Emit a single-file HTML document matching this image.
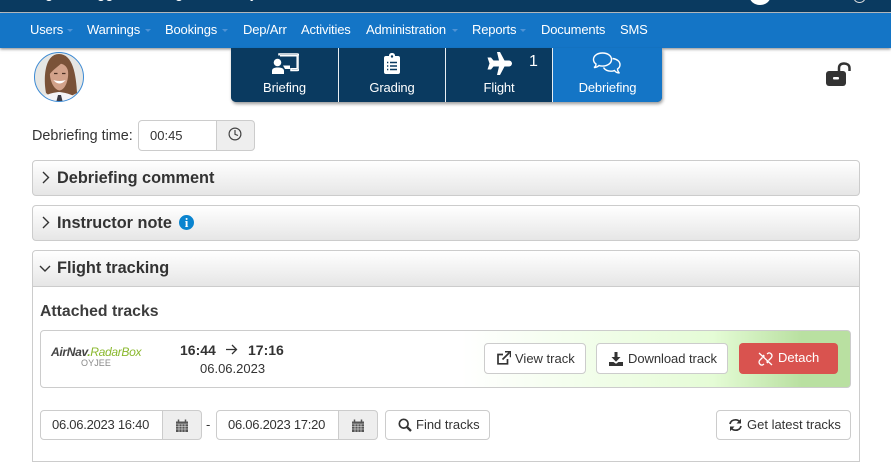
<!DOCTYPE html>
<html><head><meta charset="utf-8"><style>
*{box-sizing:border-box}
html,body{margin:0;padding:0;background:#fff;width:891px;height:469px;overflow:hidden;font-family:"Liberation Sans",Arial,sans-serif;color:#333}
.a{position:absolute}
.t{position:absolute;white-space:nowrap;line-height:16px}
.nav{color:#fff;font-size:13px;top:22px;letter-spacing:-.17px}
.car{position:absolute;top:29px;width:0;height:0;border-left:3.5px solid transparent;border-right:3.5px solid transparent;border-top:3px solid #4f93d6}
.tab{position:absolute;top:48px;height:54px;width:107px;background:#0a3a60;color:#fff;font-size:13px;text-align:center;padding-top:32px;letter-spacing:-.15px;line-height:16px}
.sep{position:absolute;top:48px;width:1px;height:54px;background:#e8eef3}
.panel{position:absolute;left:32px;width:828px;height:36px;border:1px solid #ccc;border-radius:4px;background:linear-gradient(#fff,#e6e6e6)}
.pt{position:absolute;font-size:16.3px;font-weight:bold;color:#333;left:57px;white-space:nowrap;line-height:18px}
.box{position:absolute;border:1px solid #ccc;border-radius:4px;background:#fff;font-size:13px;line-height:28px;white-space:nowrap;color:#333}
.d{letter-spacing:-.26px}
.add{position:absolute;background:#eee;border:1px solid #ccc;border-radius:0 4px 4px 0}
.top{position:absolute;top:-14px;color:#fff;font-size:15px;line-height:16px}
svg{position:absolute;display:block}
</style></head><body>
<div class="a" style="left:0;top:0;width:891px;height:12px;background:#0a3a60;overflow:hidden">
<span class="top" style="left:45px">g</span>
<span class="top" style="left:97px">gg</span>
<span class="top" style="left:175px">g</span>
<span class="top" style="left:250px">y</span>
<div class="a" style="left:749px;top:-15px;width:22px;height:20px;border-radius:50%;background:#fff"></div>
<div class="a" style="left:853px;top:-10px;width:13px;height:13px;border-radius:50%;border:1.5px solid #ddd"></div>
</div>
<div class="a" style="left:0;top:12px;width:891px;height:1px;background:#c4c8cc"></div>
<div class="a" style="left:0;top:13px;width:891px;height:35px;background:#1475c6;box-shadow:0 1px 3px rgba(0,0,0,.5)"></div>
<span class="t nav" style="left:30px">Users</span><i class="car" style="left:67px"></i>
<span class="t nav" style="left:87px">Warnings</span><i class="car" style="left:145px"></i>
<span class="t nav" style="left:165px">Bookings</span><i class="car" style="left:222px"></i>
<span class="t nav" style="left:243px;width:44px;overflow:hidden">Dep/Arr</span>
<span class="t nav" style="left:301px">Activities</span>
<span class="t nav" style="left:366px">Administration</span><i class="car" style="left:452px"></i>
<span class="t nav" style="left:472px">Reports</span><i class="car" style="left:520px"></i>
<span class="t nav" style="left:541px">Documents</span>
<span class="t nav" style="left:620px">SMS</span>

<svg style="left:33px;top:51px" width="52" height="52" viewBox="0 0 52 52">
<defs><clipPath id="c"><circle cx="26" cy="26" r="24.500"/></clipPath></defs>
<g clip-path="url(#c)"><rect width="52" height="52" fill="#e6e6e3"/>
<path d="M13 42C10 26 12 3 26 3C40 3 43 24 44 42L36 46H18Z" fill="#7a5238"/>
<path d="M6 52C8 44 18 42 26 41C34 42 44 44 47 52Z" fill="#f4f4f6"/>
<path d="M23 52L25 44H28L30 52Z" fill="#3a3a44"/>
<path d="M17 20C19 10 33 10 35 20C36 29 32 39 26.500 39.500C21 39 16 29 17 20Z" fill="#d2a28a"/>
<path d="M21 22.500H24.500M29 22.500H32.500" stroke="#4a3024" stroke-width="1.300"/>
<path d="M22 30Q26.500 34 31 30Q26.500 31 22 30Z" fill="#fff" stroke="#fff"/>
<path d="M16 24C15 14 22 7 30 10C27 15 21 17 16 24Z" fill="#7a5238"/></g>
<circle cx="26" cy="26" r="24.500" fill="none" stroke="#3c8ad4" stroke-width="1"/></svg>

<div class="a" style="left:231px;top:48px;width:431px;height:54px;border-radius:0 0 5px 5px;box-shadow:1px 2px 3px rgba(0,0,0,.4);background:#0a3a60"></div>
<div class="tab" style="left:231px;border-radius:0 0 0 5px">Briefing</div>
<div class="tab" style="left:339px;width:106px">Grading</div>
<div class="tab" style="left:446px;width:106px">Flight</div>
<div class="tab" style="left:553px;width:109px;background:#1475c6;border-radius:0 0 5px 0">Debriefing</div>
<div class="sep" style="left:338px"></div><div class="sep" style="left:445px"></div><div class="sep" style="left:552px"></div>
<svg style="left:271px;top:53px" width="28" height="21" viewBox="0 0 28 21"><path d="M8 2.500V1H26Q28 1 28 3V16Q28 17.500 26 17.500H20V15.800H26.200V2.700H9" fill="none" stroke="#fff" stroke-width="1.500"/><circle cx="6.500" cy="9.500" r="3.800" fill="#fff"/><path d="M1 21V18C1 15.500 3 14.500 6.500 14.500C10 14.500 13 15 13 18V21Z" fill="#fff"/><path d="M12 12.500H19V16H14Z" fill="#fff"/></svg>
<svg style="left:384px;top:53px" width="16" height="21" viewBox="0 0 16 21"><path d="M2 3H5C5 1 6 0 8 0S11 1 11 3H14Q16 3 16 5V19Q16 21 14 21H2Q0 21 0 19V5Q0 3 2 3Z" fill="#fff"/><circle cx="8" cy="3.500" r="1.200" fill="#0a3a60"/><path d="M6 9.500H13M6 13H13M6 16.500H13M3 9.500H4.300M3 13H4.300M3 16.500H4.300" stroke="#0a3a60" stroke-width="1.400"/></svg>
<svg style="left:486px;top:52px" width="26" height="24" viewBox="0 0 26 24"><path d="M11 0H14L18.500 8.500H23C25 8.500 26 10.500 26 11.500S25 14.500 23 14.500H18.500L14 23H11L13 14.500H7.500L5 17.500H1.500L3.500 11.500L1.500 5.500H5L7.500 8.500H13Z" fill="#fff"/></svg>
<span class="t" style="left:529px;top:54px;color:#fff;font-size:16px">1</span>
<svg style="left:592px;top:52px" width="29" height="23" viewBox="0 0 29 23" fill="none" stroke="#fff" stroke-width="1.400"><path d="M10.500 1C5 1 1.500 4 1.500 7.500C1.500 9.500 2.500 11 4 12C4 13.500 3 15 2 15.500C4.500 15.500 6 14.500 7 13.500C8 14 9.500 14.100 10.500 14.100C16 14.100 19.500 11 19.500 7.500S16 1 10.500 1Z"/><path d="M20.500 6.500C25 7 28 9.500 28 12.700C28 14.500 27 16 25.500 17C25.500 18.500 26.500 20.500 27.500 21C25 21 23.500 20 22.500 18.500C21.500 19 20 19.200 19 19.200C15 19.200 13 18 11.500 15.500"/></svg>

<svg style="left:825px;top:62px" width="27" height="25" viewBox="0 0 27 25"><rect x="1" y="9" width="20" height="15" rx="3" fill="#333"/><rect x="8" y="15" width="6" height="2.500" rx="1" fill="#fff"/><path d="M14 9V6C14 3 16 1.500 19 1.500S24.500 3 24.500 6V9" fill="none" stroke="#333" stroke-width="2.500"/></svg>

<span class="t" style="left:32px;top:128px;font-size:14.400px">Debriefing time:</span>
<div class="box" style="left:138px;top:120px;width:79px;height:31px;border-radius:4px 0 0 4px;padding-left:11px;line-height:29px">00:45</div>
<div class="add" style="left:216px;top:120px;width:39px;height:31px"></div>
<svg style="left:228px;top:127px" width="14" height="14" viewBox="0 0 14 14" fill="none" stroke="#444" stroke-width="1.200"><circle cx="7" cy="7" r="5.900"/><path d="M7 3V7.300L10 8.500"/></svg>

<div class="panel" style="top:160px"></div>
<svg style="left:42px;top:171px" width="8" height="13" viewBox="0 0 8 13" fill="none" stroke="#333" stroke-width="1.400"><path d="M1 1L6.500 6.500L1 12"/></svg>
<span class="pt" style="top:169px">Debriefing comment</span>
<div class="panel" style="top:205px"></div>
<svg style="left:42px;top:216px" width="8" height="13" viewBox="0 0 8 13" fill="none" stroke="#333" stroke-width="1.400"><path d="M1 1L6.500 6.500L1 12"/></svg>
<span class="pt" style="top:214px">Instructor note</span>
<div class="a" style="left:179px;top:215px;width:15px;height:15px;border-radius:50%;background:#0a84cf;color:#fff;font:bold 13px/15px 'Liberation Serif',serif;text-align:center">i</div>

<div class="a" style="left:32px;top:250px;width:828px;height:212px;border:1px solid #ccc;border-radius:4px 4px 0 0;background:#fff"></div>
<div class="a" style="left:33px;top:251px;width:826px;height:36px;border-bottom:1px solid #ccc;border-radius:4px 4px 0 0;background:linear-gradient(#fff,#e6e6e6)"></div>
<svg style="left:39px;top:265px" width="12" height="8" viewBox="0 0 12 8" fill="none" stroke="#333" stroke-width="1.400"><path d="M1 1L6 6L11 1"/></svg>
<span class="pt" style="top:259px">Flight tracking</span>

<span class="t" style="left:40px;top:304px;font-size:15.800px;font-weight:bold;color:#3c3c3c">Attached tracks</span>

<div class="a" style="left:40px;top:330px;width:811px;height:58px;border:1px solid #ccc;border-radius:4px;background:linear-gradient(90deg,#fff 0,#fff 52%,#e5fcd6 83%,#b9e0a1 94%,#b9e0a1 100%)"></div>
<span class="t" style="left:51px;top:344px;font-size:12.100px;font-weight:bold;font-style:italic;letter-spacing:-.35px;color:#444">AirNav<span style="color:#7db52a">.</span><span style="color:#8ab82e;font-weight:normal">RadarBox</span></span>
<span class="t" style="left:81px;top:355px;font-size:9px;color:#888;letter-spacing:.1px">OYJEE</span>
<span class="t" style="left:180px;top:342px;font-size:14px;font-weight:bold">16:44</span>
<svg style="left:225px;top:344px" width="13" height="11" viewBox="0 0 13 11" fill="none" stroke="#333" stroke-width="1.300"><path d="M1 5.500H11.500M7 1L11.500 5.500L7 10"/></svg>
<span class="t" style="left:248px;top:342px;font-size:14px;font-weight:bold">17:16</span>
<span class="t" style="left:200px;top:361px;font-size:13px">06.06.2023</span>

<div class="box" style="left:484px;top:343px;width:102px;height:31px;padding-left:30px;line-height:29px">View track</div>
<svg style="left:497px;top:351px" width="14" height="14" viewBox="0 0 14 14" fill="none" stroke="#333" stroke-width="1.700"><path d="M10.500 8V12.800H1V3.500H6"/><path d="M5.500 8.500L12.500 1.500"/><path d="M8 .8H13.500V6.300" stroke-width="1.500"/></svg>
<div class="box" style="left:596px;top:343px;width:132px;height:31px;padding-left:31px;line-height:29px;letter-spacing:-.05px">Download track</div>
<svg style="left:609px;top:352px" width="14" height="14" viewBox="0 0 14 14"><path d="M5.500 0H8.500V5H11.500L7 9.800L2.500 5H5.500Z" fill="#333"/><path d="M0 10H4.500L7 11.800L9.500 10H14V14H0Z" fill="#333"/></svg>
<div class="a" style="left:739px;top:343px;width:99px;height:31px;background:#d9534f;border-radius:4px;color:#fff;font-size:13px;line-height:30px;padding-left:39px">Detach</div>
<svg style="left:758px;top:352px" width="15" height="14" viewBox="0 0 15 14" fill="none" stroke="#fff" stroke-width="1.300"><path d="M1 1L14 13"/><path d="M9 2L10.500 1C12 .5 14 2 14 4C14 5 13.500 5.500 13 6L10.500 8.500"/><path d="M6 12L4.500 13C3 13.500 1 12 1 10C1 9 1.500 8.500 2 8L4.500 5.500"/><path d="M5 3L6.500 4.500M8.500 9.500L10 11"/></svg>

<div class="box d" style="left:40px;top:410px;width:123px;height:30px;border-radius:4px 0 0 4px;padding-left:11px">06.06.2023 16:40</div>
<div class="add" style="left:162px;top:410px;width:40px;height:30px"></div>
<svg style="left:176px;top:419px" width="12" height="13" viewBox="0 0 12 13"><path d="M0 2.500H12V13H0Z" fill="#555"/><path d="M2.500 .5V3M9.500 .5V3" stroke="#555" stroke-width="1.500"/><path d="M0 5H12M0 7.500H12M0 10H12M3 5V13M6 5V13M9 5V13" stroke="#eee" stroke-width=".6"/></svg>
<span class="t" style="left:206px;top:417px;font-size:13px">-</span>
<div class="box d" style="left:216px;top:410px;width:123px;height:30px;border-radius:4px 0 0 4px;padding-left:11px">06.06.2023 17:20</div>
<div class="add" style="left:338px;top:410px;width:40px;height:30px"></div>
<svg style="left:352px;top:419px" width="12" height="13" viewBox="0 0 12 13"><path d="M0 2.500H12V13H0Z" fill="#555"/><path d="M2.500 .5V3M9.500 .5V3" stroke="#555" stroke-width="1.500"/><path d="M0 5H12M0 7.500H12M0 10H12M3 5V13M6 5V13M9 5V13" stroke="#eee" stroke-width=".6"/></svg>
<div class="box" style="left:385px;top:410px;width:105px;height:30px;padding-left:30px">Find tracks</div>
<svg style="left:398px;top:418px" width="14" height="14" viewBox="0 0 14 14" fill="none" stroke="#333"><circle cx="5.700" cy="5.700" r="4.400" stroke-width="1.700"/><path d="M9 9L13 13" stroke-width="2.300"/></svg>
<div class="box" style="left:716px;top:410px;width:135px;height:30px;padding-left:30px">Get latest tracks</div>
<svg style="left:729px;top:418px" width="13" height="14" viewBox="0 0 13 14" fill="none" stroke="#333" stroke-width="1.700"><path d="M1 6C1.500 3.500 3.500 1.800 6.500 1.800C8.500 1.800 10 2.700 11 4"/><path d="M12 8C11.500 10.500 9.500 12.200 6.500 12.200C4.500 12.200 3 11.300 2 10"/><path d="M12 .8V5.500H7.500Z" fill="#333" stroke="none"/><path d="M1 13.200V8.500H5.500Z" fill="#333" stroke="none"/></svg>
</body></html>
